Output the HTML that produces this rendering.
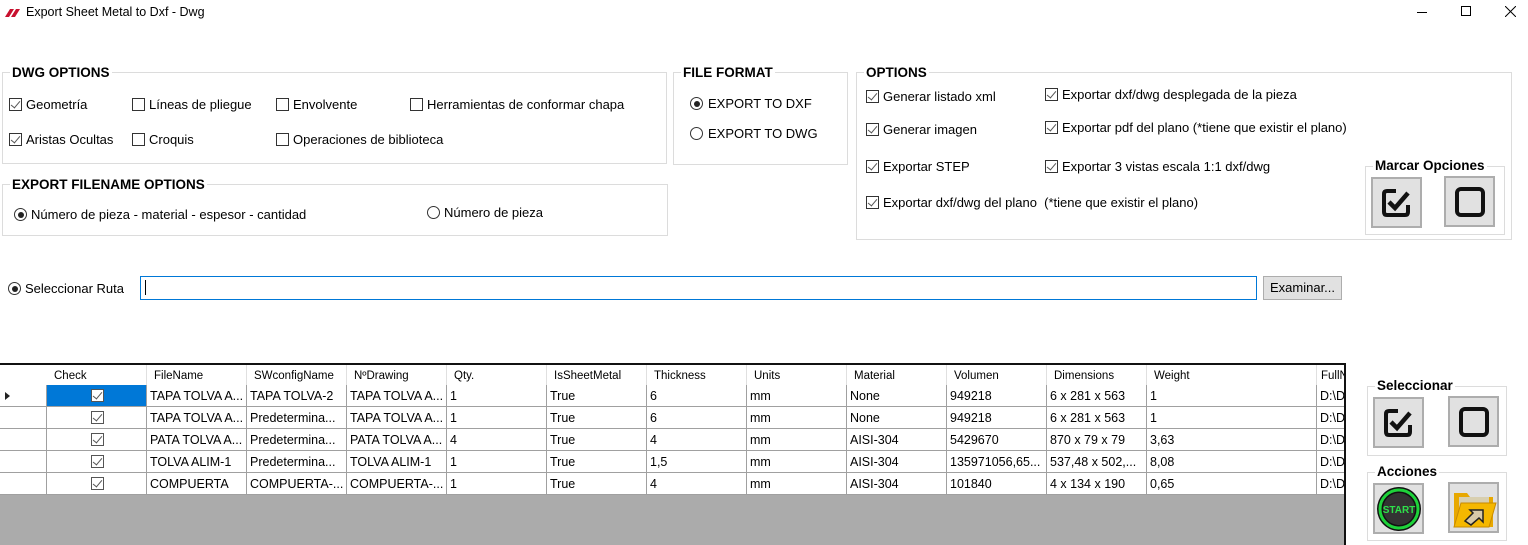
<!DOCTYPE html>
<html><head><meta charset="utf-8"><style>
*{box-sizing:border-box;margin:0;padding:0}
body{width:1528px;height:545px;background:#fff;position:relative;overflow:hidden;font-family:"Liberation Sans",sans-serif;font-size:13px;color:#000}
.a{position:absolute;white-space:nowrap}
.gb{position:absolute;border:1px solid #dcdcdc}
.gt{position:absolute;background:#fff;font-weight:bold;font-size:13.5px;padding:0 2px;line-height:16px}
.cb{position:absolute;width:13px;height:13px;border:1px solid #333;background:#fff}
.cb.c::after{content:"";position:absolute;left:3px;top:0px;width:4px;height:8px;border:solid #555;border-width:0 1.3px 1.3px 0;transform:rotate(40deg)}
.rb{position:absolute;width:13px;height:13px;border:1px solid #333;border-radius:50%;background:#fff}
.rb.c::after{content:"";position:absolute;left:2.5px;top:2.5px;width:6px;height:6px;border-radius:50%;background:#222}
.bt{position:absolute;width:51px;height:51px;background:#e1e1e1;border:2px solid #adadad}
.cell{position:absolute;height:22px;line-height:22px;border-right:1px solid #a0a0a0;border-bottom:1px solid #a0a0a0;padding-left:3px;overflow:hidden;font-size:12.5px}
.hd{position:absolute;height:22px;line-height:22px;border-right:1px solid #e0e0e0;padding-left:7px;font-size:11.5px;color:#000}
</style></head><body>
<svg class="a" style="left:4px;top:6px" width="18" height="12"><path d="M1 11 L6 3 L10 3 L5 11Z M7 11 L12 3 L16 3 L11 11Z" fill="#c8102e"/></svg>
<div class="a" style="left:26px;top:5px;font-size:12.5px">Export Sheet Metal to Dxf - Dwg</div>
<div class="a" style="left:1417px;top:12px;width:10px;height:1px;background:#000"></div>
<div class="a" style="left:1461px;top:6px;width:10px;height:10px;border:1px solid #000"></div>
<svg class="a" style="left:1505px;top:6px" width="11" height="11"><path d="M0 0L11 11M11 0L0 11" stroke="#000"/></svg>

<div class="gb" style="left:2px;top:72px;width:665px;height:92px"></div>
<div class="gt" style="left:10px;top:65px">DWG OPTIONS</div>
<div class="cb c" style="left:9px;top:98px"></div><div class="a" style="left:26px;top:97px">Geometría</div>
<div class="cb" style="left:132px;top:98px"></div><div class="a" style="left:149px;top:97px">Líneas de pliegue</div>
<div class="cb" style="left:276px;top:98px"></div><div class="a" style="left:293px;top:97px">Envolvente</div>
<div class="cb" style="left:410px;top:98px"></div><div class="a" style="left:427px;top:97px">Herramientas de conformar chapa</div>
<div class="cb c" style="left:9px;top:133px"></div><div class="a" style="left:26px;top:132px">Aristas Ocultas</div>
<div class="cb" style="left:132px;top:133px"></div><div class="a" style="left:149px;top:132px">Croquis</div>
<div class="cb" style="left:276px;top:133px"></div><div class="a" style="left:293px;top:132px">Operaciones de biblioteca</div>

<div class="gb" style="left:673px;top:72px;width:175px;height:93px"></div>
<div class="gt" style="left:681px;top:65px">FILE FORMAT</div>
<div class="rb c" style="left:690px;top:97px"></div><div class="a" style="left:708px;top:96px">EXPORT TO DXF</div>
<div class="rb" style="left:690px;top:127px"></div><div class="a" style="left:708px;top:126px">EXPORT TO DWG</div>

<div class="gb" style="left:856px;top:72px;width:656px;height:168px"></div>
<div class="gt" style="left:864px;top:65px">OPTIONS</div>
<div class="cb c" style="left:866px;top:90px"></div><div class="a" style="left:883px;top:89px">Generar listado xml</div>
<div class="cb c" style="left:866px;top:123px"></div><div class="a" style="left:883px;top:122px">Generar imagen</div>
<div class="cb c" style="left:866px;top:160px"></div><div class="a" style="left:883px;top:159px">Exportar STEP</div>
<div class="cb c" style="left:866px;top:196px"></div><div class="a" style="left:883px;top:195px">Exportar dxf/dwg del plano&nbsp; (*tiene que existir el plano)</div>
<div class="cb c" style="left:1045px;top:88px"></div><div class="a" style="left:1062px;top:87px">Exportar dxf/dwg desplegada de la pieza</div>
<div class="cb c" style="left:1045px;top:121px"></div><div class="a" style="left:1062px;top:120px">Exportar pdf del plano (*tiene que existir el plano)</div>
<div class="cb c" style="left:1045px;top:160px"></div><div class="a" style="left:1062px;top:159px">Exportar 3 vistas escala 1:1 dxf/dwg</div>

<div class="gb" style="left:1365px;top:166px;width:140px;height:69px"></div>
<div class="gt" style="left:1373px;top:158px">Marcar Opciones</div>
<div class="bt" style="left:1371px;top:177px"></div>
<svg class="a" style="left:1381px;top:187px" width="32" height="32"><path d="M15 4H6Q3 4 3 7V25Q3 28 6 28H24Q27 28 27 25V18" fill="none" stroke="#111" stroke-width="4"/><path d="M8 15L14 21L27 6" fill="none" stroke="#111" stroke-width="4.5"/></svg>
<div class="bt" style="left:1444px;top:176px"></div>
<svg class="a" style="left:1454px;top:186px" width="32" height="32"><rect x="3" y="3" width="26" height="26" rx="4" fill="none" stroke="#111" stroke-width="4"/></svg>

<div class="gb" style="left:2px;top:184px;width:666px;height:52px"></div>
<div class="gt" style="left:10px;top:177px">EXPORT FILENAME OPTIONS</div>
<div class="rb c" style="left:14px;top:208px"></div><div class="a" style="left:31px;top:207px">Número de pieza - material - espesor - cantidad</div>
<div class="rb" style="left:427px;top:206px"></div><div class="a" style="left:444px;top:205px">Número de pieza</div>

<div class="rb c" style="left:8px;top:282px"></div><div class="a" style="left:25px;top:281px">Seleccionar Ruta</div>
<div class="a" style="left:140px;top:276px;width:1117px;height:24px;border:1px solid #0078d7"></div>
<div class="a" style="left:145px;top:280px;width:1px;height:15px;background:#000"></div>
<div class="a" style="left:1263px;top:276px;width:79px;height:24px;border:1px solid #adadad;background:#e1e1e1;text-align:center;line-height:22px">Examinar...</div>

<div class="a" style="left:0;top:363px;width:1346px;height:182px;background:#ababab"></div>
<div class="a" style="left:0;top:363px;width:1346px;height:2px;background:#111"></div>
<div class="a" style="left:1344px;top:363px;width:2px;height:182px;background:#111"></div>
<div class="a" style="left:0;top:365px;width:1344px;height:130px;background:#fff;overflow:hidden">
<div class="hd" style="left:47px;top:0;width:100px">Check</div>
<div class="hd" style="left:147px;top:0;width:100px">FileName</div>
<div class="hd" style="left:247px;top:0;width:100px">SWconfigName</div>
<div class="hd" style="left:347px;top:0;width:100px">NºDrawing</div>
<div class="hd" style="left:447px;top:0;width:100px">Qty.</div>
<div class="hd" style="left:547px;top:0;width:100px">IsSheetMetal</div>
<div class="hd" style="left:647px;top:0;width:100px">Thickness</div>
<div class="hd" style="left:747px;top:0;width:100px">Units</div>
<div class="hd" style="left:847px;top:0;width:100px">Material</div>
<div class="hd" style="left:947px;top:0;width:100px">Volumen</div>
<div class="hd" style="left:1047px;top:0;width:100px">Dimensions</div>
<div class="hd" style="left:1147px;top:0;width:170px">Weight</div>
<div class="hd" style="left:1317px;top:0;width:100px;padding-left:4px">FullName</div>
<div id="rows"></div>
</div>
<div class="a" style="left:5px;top:392px;width:0;height:0;border-left:5px solid #222;border-top:4px solid transparent;border-bottom:4px solid transparent"></div>
<script>
var d=[["TAPA TOLVA A...","TAPA TOLVA-2","TAPA TOLVA A...","1","True","6","mm","None","949218","6 x 281 x 563","1"],
["TAPA TOLVA A...","Predetermina...","TAPA TOLVA A...","1","True","6","mm","None","949218","6 x 281 x 563","1"],
["PATA TOLVA A...","Predetermina...","PATA TOLVA A...","4","True","4","mm","AISI-304","5429670","870 x 79 x 79","3,63"],
["TOLVA ALIM-1","Predetermina...","TOLVA ALIM-1","1","True","1,5","mm","AISI-304","135971056,65...","537,48 x 502,...","8,08"],
["COMPUERTA","COMPUERTA-...","COMPUERTA-...","1","True","4","mm","AISI-304","101840","4 x 134 x 190","0,65"]];
var h="",xs=[147,247,347,447,547,647,747,847,947,1047,1147],ws=[100,100,100,100,100,100,100,100,100,100,170];
d.forEach(function(r,i){var y=20+i*22;
h+='<div class="cell" style="left:0;top:'+y+'px;width:47px;height:22px"></div>';
h+='<div class="cell" style="left:47px;top:'+y+'px;width:100px;'+(i==0?'background:#0078d7;':'')+'"><div class="cb c" style="left:44px;top:4px;border-color:#555"></div></div>';
r.forEach(function(v,j){h+='<div class="cell" style="left:'+xs[j]+'px;top:'+y+'px;width:'+ws[j]+'px">'+v+'</div>';});
h+='<div class="cell" style="left:1317px;top:'+y+'px;width:100px">D:\\D</div>';});
document.getElementById("rows").innerHTML=h;
</script>

<div class="gb" style="left:1367px;top:386px;width:140px;height:70px"></div>
<div class="gt" style="left:1375px;top:378px">Seleccionar</div>
<div class="bt" style="left:1373px;top:397px"></div>
<svg class="a" style="left:1383px;top:407px" width="32" height="32"><path d="M15 4H6Q3 4 3 7V25Q3 28 6 28H24Q27 28 27 25V18" fill="none" stroke="#111" stroke-width="4"/><path d="M8 15L14 21L27 6" fill="none" stroke="#111" stroke-width="4.5"/></svg>
<div class="bt" style="left:1448px;top:396px"></div>
<svg class="a" style="left:1458px;top:406px" width="32" height="32"><rect x="3" y="3" width="26" height="26" rx="4" fill="none" stroke="#111" stroke-width="4"/></svg>

<div class="gb" style="left:1367px;top:472px;width:140px;height:69px"></div>
<div class="gt" style="left:1375px;top:464px">Acciones</div>
<div class="bt" style="left:1373px;top:483px"></div>
<svg class="a" style="left:1376px;top:486px" width="46" height="46"><circle cx="23" cy="23" r="22" fill="#111"/><circle cx="23" cy="23" r="19" fill="none" stroke="#1ed23a" stroke-width="3"/><circle cx="23" cy="23" r="16" fill="#333"/><text x="23" y="27" text-anchor="middle" font-family="Liberation Sans" font-weight="bold" font-size="10" fill="#2ee04a">START</text></svg>
<div class="bt" style="left:1448px;top:482px"></div>
<svg class="a" style="left:1451px;top:485px" width="46" height="46"><path d="M3 8H16L19 12H42V42H3Z" fill="#e8a800"/><rect x="8" y="12" width="30" height="24" fill="#d8cfb0"/><path d="M3 42L10 18H45L38 42Z" fill="#f5b800" stroke="#c88a00"/><path d="M14 36L22 28L19 25H32V37L28 33L20 40Z" fill="#d8c9a8" stroke="#222" stroke-width="1.5"/></svg>
</body></html>
